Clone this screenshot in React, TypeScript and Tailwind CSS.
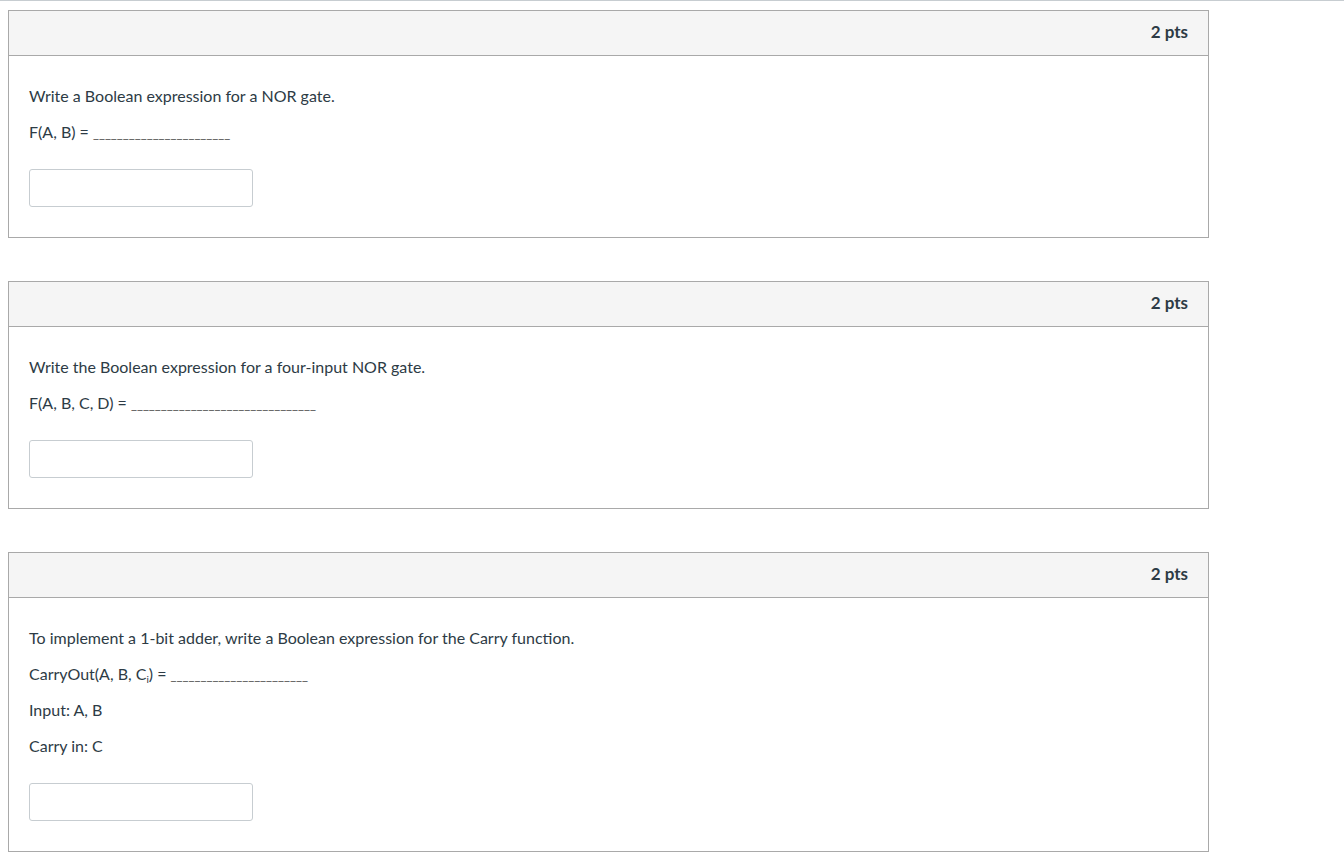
import React from 'react';

type Question = {
  id: number;
  lines: React.ReactNode[];
};

const blank = (n: number) => <span className="text-[13px] text-[#555]">{'_'.repeat(n)}</span>;

const questions: Question[] = [
  {
    id: 1,
    lines: [
      'Write a Boolean expression for a NOR gate.',
      <>F(A, B) = {blank(23)}</>,
    ],
  },
  {
    id: 2,
    lines: [
      'Write the Boolean expression for a four-input NOR gate.',
      <>F(A, B, C, D) = {blank(31)}</>,
    ],
  },
  {
    id: 3,
    lines: [
      'To implement a 1-bit adder, write a Boolean expression for the Carry function.',
      <>
        CarryOut(A, B, C<sub className="text-[10px] leading-none">i</sub>) = {blank(23)}
      </>,
      'Input: A, B',
      'Carry in: C',
    ],
  },
];

const QuestionCard = ({ q }: { q: Question }) => (
  <div className="w-[1201px] border border-[#a9a9a9] bg-white">
    <div className="h-[45px] flex items-center justify-end px-5 pb-[2px] bg-[#f5f5f5] border-b border-[#a9a9a9]">
      <span className="text-[17px] font-bold text-[#2d3b45]">2 pts</span>
    </div>
    <div className="px-5 pt-[29px] pb-[30px]">
      {q.lines.map((line, i) => (
        <p key={i} className="text-[16px] leading-[21px] h-[21px] mb-[15px] text-[#2d3b45]">
          {line}
        </p>
      ))}
      <input
        type="text"
        className="mt-[27px] block w-[224px] h-[38px] border border-[#c7cdd1] rounded-[3px] bg-white"
      />
    </div>
  </div>
);

export default function App() {
  return (
    <div
      className="min-h-[860px] bg-white border-t border-[#c7cdd1] pl-2 pt-[9px]"
      style={{ fontFamily: 'Lato, "Liberation Sans", sans-serif' }}
    >
      <div className="flex flex-col gap-[43px]">
        {questions.map((q) => (
          <QuestionCard key={q.id} q={q} />
        ))}
      </div>
    </div>
  );
}
